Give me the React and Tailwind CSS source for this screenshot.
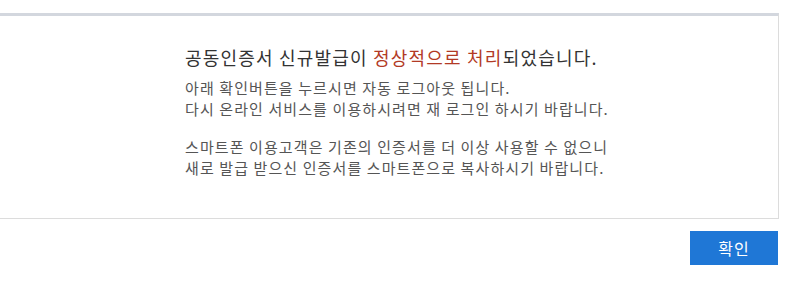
export default function App() {
  return (
    <div
      className="w-[800px] h-[291px] bg-white pt-[13px]"
      style={{ fontFamily: '"Noto Sans CJK KR", "Noto Sans", sans-serif' }}
    >
      <div className="w-[779px] border-t-[3px] border-t-[#d3d7de] border-r border-b border-r-[#dcdcdc] border-b-[#dcdcdc] pl-[185px] pt-[28px] pb-[40px]">
        <h2 className="text-[18px] leading-[26px] tracking-[1.2px] text-[#333] font-normal">
          공동인증서 신규발급이 <span className="text-[#b23a25]">정상적으로 처리</span>되었습니다.
        </h2>
        <p className="mt-[7px] text-[15px] leading-[21px] tracking-[1.1px] text-[#555]">
          아래 확인버튼을 누르시면 자동 로그아웃 됩니다.
          <br />
          다시 온라인 서비스를 이용하시려면 재 로그인 하시기 바랍니다.
        </p>
        <p className="mt-[17px] text-[15px] leading-[21px] tracking-[1.1px] text-[#555]">
          스마트폰 이용고객은 기존의 인증서를 더 이상 사용할 수 없으니
          <br />
          새로 발급 받으신 인증서를 스마트폰으로 복사하시기 바랍니다.
        </p>
      </div>
      <div className="w-[778px] flex justify-end mt-[12px]">
        <button className="w-[88px] h-[34px] bg-[#1f77d6] text-white text-[16px] tracking-[1px]">
          확인
        </button>
      </div>
    </div>
  )
}
